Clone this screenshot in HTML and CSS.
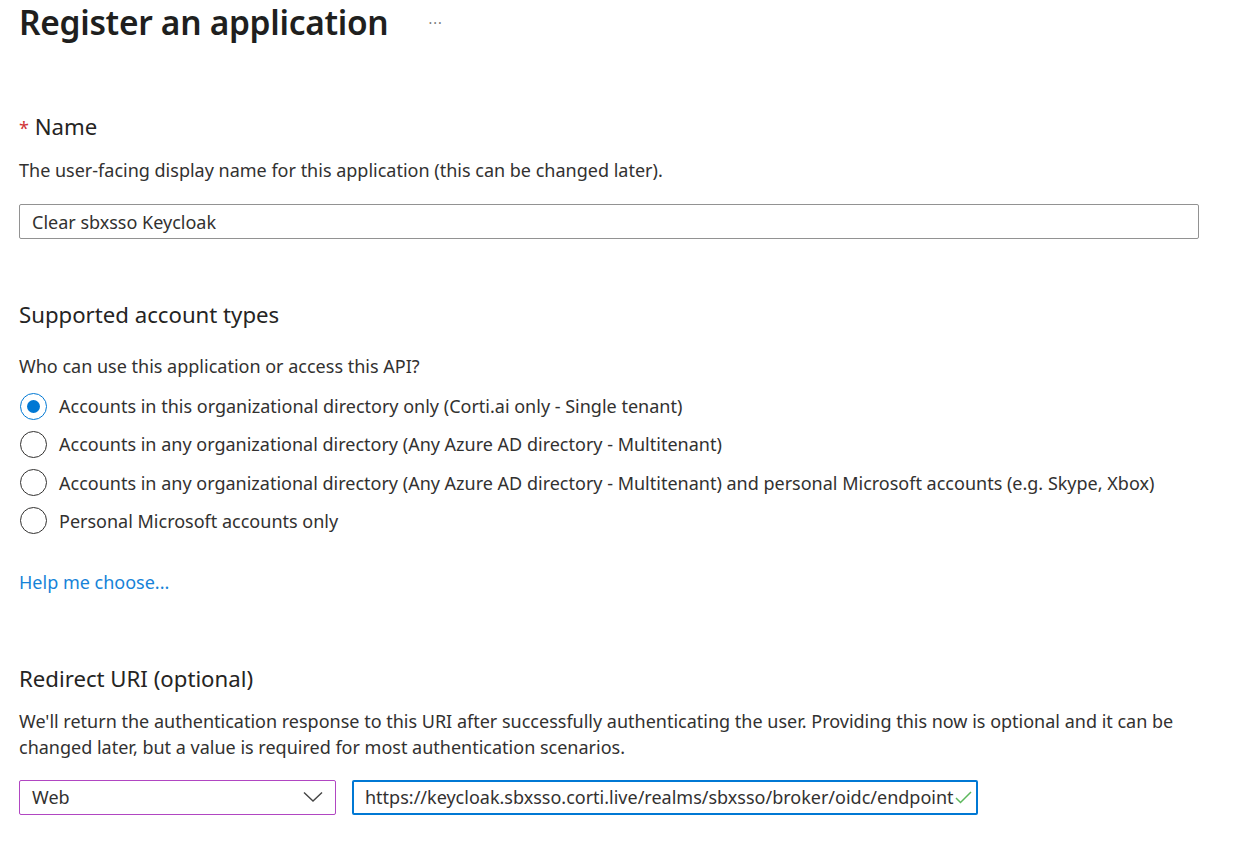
FILE: index.html
```html
<!DOCTYPE html>
<html lang="en">
<head>
    <meta charset="UTF-8">
    <meta name="viewport" content="width=device-width, initial-scale=1.0">
    <title>Register an application</title>
    <link rel="stylesheet" href="styles.css">
</head>
<body>
    <div class="page">
        <div class="page-header">
            <h1>Register an application</h1>
            <span class="more">···</span>
        </div>

        <div class="section section-name">
            <h2><span class="required">*</span> Name</h2>
            <p class="desc">The user-facing display name for this application (this can be changed later).</p>
            <input class="text-input name-input" type="text" value="Clear sbxsso Keycloak">
        </div>

        <div class="section section-accounts">
            <h2>Supported account types</h2>
            <p class="desc">Who can use this application or access this API?</p>
            <div class="radio-list">
                <label class="radio checked"><span class="dot"></span>Accounts in this organizational directory only (Corti.ai only - Single tenant)</label>
                <label class="radio"><span class="dot"></span>Accounts in any organizational directory (Any Azure AD directory - Multitenant)</label>
                <label class="radio"><span class="dot"></span>Accounts in any organizational directory (Any Azure AD directory - Multitenant) and personal Microsoft accounts (e.g. Skype, Xbox)</label>
                <label class="radio"><span class="dot"></span>Personal Microsoft accounts only</label>
            </div>
            <a class="help-link" href="#">Help me choose...</a>
        </div>

        <div class="section section-redirect">
            <h2>Redirect URI (optional)</h2>
            <p class="desc wide">We'll return the authentication response to this URI after successfully authenticating the user. Providing this now is optional and it can be changed later, but a value is required for most authentication scenarios.</p>
            <div class="uri-row">
                <div class="select">
                    <span>Web</span>
                    <svg class="chevron" width="20" height="12" viewBox="0 0 20 12"><path d="M1 1.5 L10 10 L19 1.5" fill="none" stroke="#444" stroke-width="1.4"/></svg>
                </div>
                <div class="uri-input">
                    <span class="uri-text">https://keycloak.sbxsso.corti.live/realms/sbxsso/broker/oidc/endpoint</span>
                    <svg class="check" width="17" height="13" viewBox="0 0 17 13"><path d="M1 7 L5.5 11.5 L16 1" fill="none" stroke="#5cb85c" stroke-width="1.5"/></svg>
                </div>
            </div>
        </div>
    </div>
</body>
</html>
```

FILE: styles.css
```css
body {
    margin: 0;
    background: #fff;
    font-family: "Noto Sans", "Open Sans", sans-serif;
    color: #323130;
}
.page {
    padding: 0 19px;
}
.page-header {
    display: flex;
    align-items: center;
    height: 44px;
}
h1 {
    margin: 0;
    font-size: 33.5px;
    font-weight: 600;
    color: #201f1e;
    letter-spacing: -0.3px;
}
.more {
    margin-left: 40px;
    font-size: 14px;
    color: #777;
    letter-spacing: 1px;
}
h2 {
    margin: 0;
    font-size: 22.2px;
    font-weight: 400;
    color: #252423;
    line-height: 28px;
}
.required {
    color: #d13438;
    font-size: 18px;
}
.desc {
    margin: 0;
    font-size: 18px;
    line-height: 26px;
    color: #323130;
}
.section-name {
    padding-top: 69px;
}
.section-name .desc {
    margin-top: 15px;
}
.text-input {
    display: block;
    box-sizing: border-box;
    margin-top: 21px;
    width: 1180px;
    height: 35px;
    border: 1px solid #929292;
    border-radius: 2px;
    padding: 0 12px;
    font: inherit;
    font-size: 18px;
    color: #323130;
}
.section-accounts {
    padding-top: 62px;
}
.section-accounts .desc {
    margin-top: 24px;
}
.radio-list {
    margin-top: 14px;
    display: flex;
    flex-direction: column;
    gap: 12.3px;
}
.radio {
    display: flex;
    align-items: center;
    height: 26px;
    font-size: 18px;
    color: #323130;
}
.dot {
    box-sizing: border-box;
    width: 27px;
    height: 27px;
    border: 1.5px solid #323130;
    border-radius: 50%;
    margin-left: 1px;
    margin-right: 12px;
    display: flex;
    align-items: center;
    justify-content: center;
}
.radio.checked .dot {
    border-color: #0078d4;
}
.radio.checked .dot::after {
    content: "";
    width: 13px;
    height: 13px;
    border-radius: 50%;
    background: #0078d4;
}
.help-link {
    display: inline-block;
    margin-top: 35px;
    font-size: 18px;
    line-height: 26px;
    color: #1683d8;
    text-decoration: none;
}
.section-redirect {
    padding-top: 70px;
}
.section-redirect .desc {
    margin-top: 15px;
    max-width: 1180px;
}
.uri-row {
    display: flex;
    gap: 16px;
    margin-top: 20px;
}
.select {
    box-sizing: border-box;
    width: 317px;
    height: 35px;
    border: 1.5px solid #b146c2;
    border-radius: 2px;
    display: flex;
    align-items: center;
    justify-content: space-between;
    padding: 0 12px;
    font-size: 18px;
}
.uri-input {
    box-sizing: border-box;
    width: 626px;
    height: 35px;
    border: 2px solid #0078d4;
    border-radius: 2px;
    display: flex;
    align-items: center;
    padding: 0 2px 0 11px;
    font-size: 18px;
}
.uri-text {
    white-space: nowrap;
    flex: none;
}
.check {
    flex: none;
    margin-left: 1px;
}
```
